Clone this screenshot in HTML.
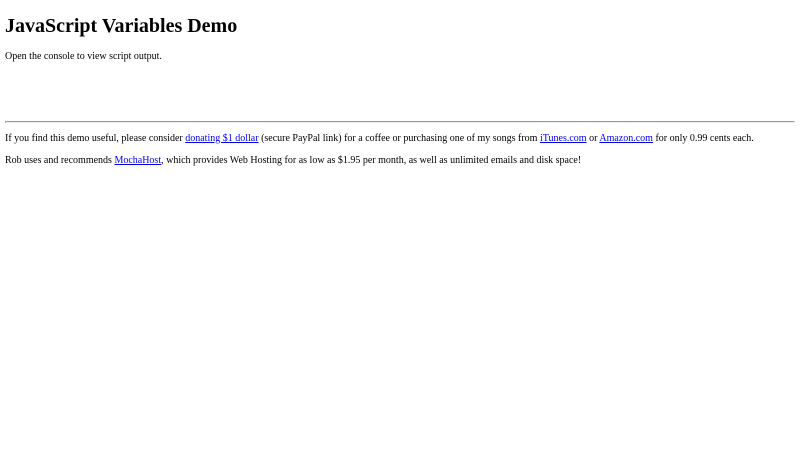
<!DOCTYPE html>
<html>
<head>
<meta charset="utf-8">
<style>
body{font-family:"Liberation Serif",serif;margin:5px;color:#000;background:#fff;font-size:10px}
h1{font-size:20px;margin:15.4px 0 12.4px}
p{margin:10px 0}
p.l{margin-top:11px}
hr{margin:5px 0}
a{color:#0000ee}
</style>
</head>
<body>
<h1>JavaScript Variables Demo</h1>
<p>Open the console to view script output.</p>
<div style="height:44px"></div>
<hr>
<p>If you find this demo useful, please consider <a href="#">donating $1 dollar</a> (secure PayPal link) for a coffee or purchasing one of my songs from <a href="#">iTunes.com</a> or <a href="#">Amazon.com</a> for only 0.99 cents each.</p>
<p class="l">Rob uses and recommends <a href="#">MochaHost</a>, which provides Web Hosting for as low as $1.95 per month, as well as unlimited emails and disk space!</p>
</body>
</html>
